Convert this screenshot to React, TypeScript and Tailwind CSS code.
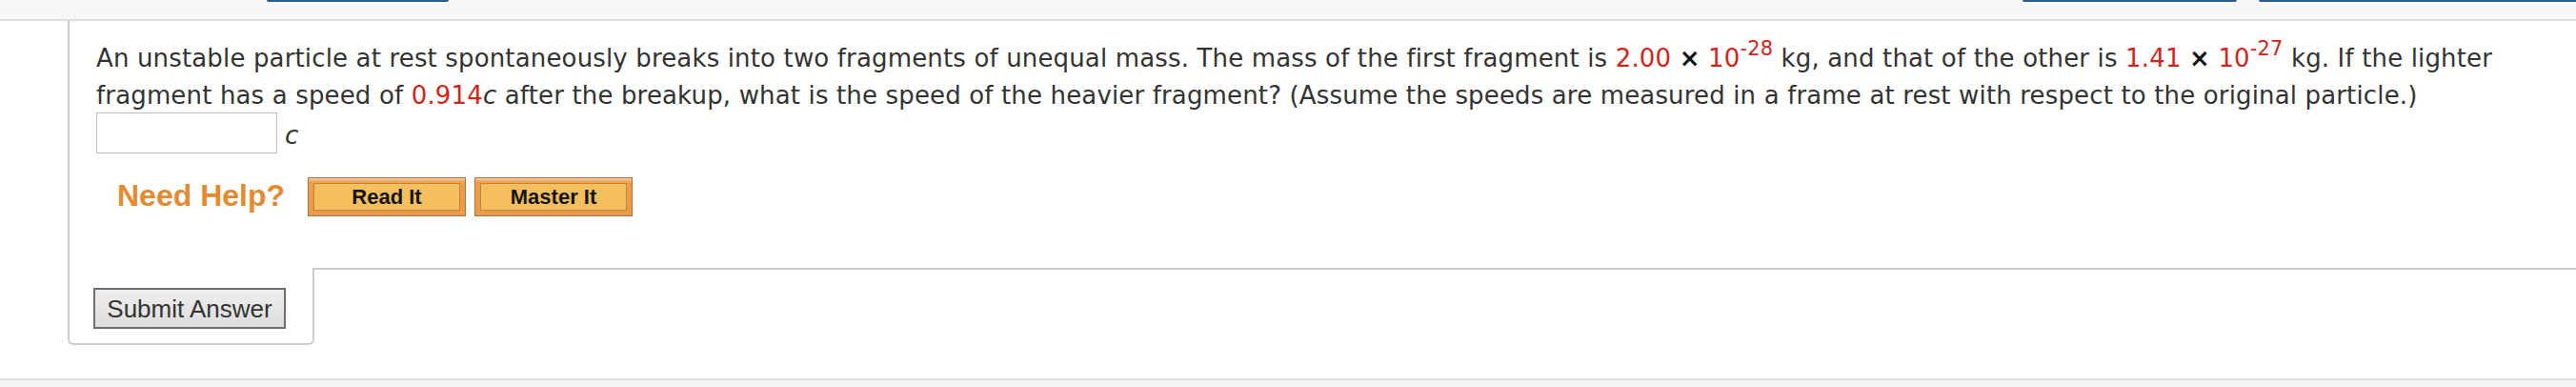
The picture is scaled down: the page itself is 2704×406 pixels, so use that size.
const RED = "text-[#cf261c]";

function Num({ children }: { children: React.ReactNode }) {
  return <span className={RED}>{children}</span>;
}

function Sci({ base, exp }: { base: string; exp: string }) {
  return (
    <>
      <Num>{base}</Num> <span className="font-bold text-[#111]">×</span>{" "}
      <Num>10</Num>
      <sup className={`${RED} text-[21px] leading-none relative top-[-0.55em] align-baseline`}>{exp}</sup>
    </>
  );
}

function HelpButton({ label }: { label: string }) {
  return (
    <button className="h-[41px] w-[166px] border border-[#a8733c] bg-[linear-gradient(to_bottom,#f6d2a6_0px,#ee9f4a_4px,#eb9944_100%)] p-[5px]">
      <span className="flex h-full w-full items-center justify-center border border-[#b9874c] bg-[#f4bf5c] font-['Liberation_Sans',Arial,sans-serif] text-[22px] font-bold text-[#141414]">
        {label}
      </span>
    </button>
  );
}

export default function App() {
  return (
    <div className="h-[406px] w-[2704px] overflow-hidden bg-white font-['DejaVu_Sans',Verdana,sans-serif] text-[#333]">
      {/* top bar with the bottoms of the nav buttons */}
      <div className="flex h-[22px] items-start border-b-2 border-[#dddddd] bg-[#f7f7f7]">
        <div className="ml-[280px] h-[2px] w-[191px] rounded-b-sm bg-[#2b5e91]" />
        <div className="flex-1" />
        <div className="h-[2px] w-[225px] rounded-b-sm bg-[#2b5e91]" />
        <div className="ml-[23px] h-[2px] w-[333px] rounded-bl-sm bg-[#2b5e91]" />
      </div>

      <div className="ml-[71px]">
        {/* question */}
        <div className="h-[259px] border-l-2 border-[#cccccc] pl-[28px] pt-[20px]">
          <p className="w-[2590px] text-[26px] leading-[39px] tracking-[0.15px]">
            An unstable particle at rest spontaneously breaks into two fragments of unequal mass. The mass of the
            first fragment is <Sci base="2.00" exp="-28" /> kg, and that of the other is{" "}
            <Sci base="1.41" exp="-27" /> kg. If the lighter fragment has a speed of <Num>0.914</Num>
            <i>c</i> after the breakup, what is the speed of the heavier fragment? (Assume the speeds are measured
            in a frame at rest with respect to the original particle.)
          </p>
          <div className="-mt-[2px] flex h-[43px] items-center">
            <input className="h-[43px] w-[190px] border border-[#bfbfbf] bg-white outline-none" />
            <i className="ml-[8px] mt-[6px] text-[26px]">c</i>
          </div>
          <div className="mt-[25px] flex items-center">
            <span className="mb-[4px] ml-[22px] whitespace-nowrap font-['Liberation_Sans',Arial,sans-serif] text-[32px] font-bold leading-[32px] text-[#e48a30]">
              Need Help?
            </span>
            <div className="ml-[24px] flex gap-[9px]">
              <HelpButton label="Read It" />
              <HelpButton label="Master It" />
            </div>
          </div>
        </div>

        {/* submit area */}
        <div className="flex">
          <div className="h-[81px] w-[259px] rounded-b-[6px] border-x-2 border-b-2 border-[#cccccc] pl-[25px] pt-[21px]">
            <button className="h-[43px] w-[202px] border-2 border-[#6e6e6e] bg-[linear-gradient(to_bottom,#efefef,#dcdcdc)] font-['Liberation_Sans',Arial,sans-serif] text-[26px] leading-none text-[#333]">
              Submit Answer
            </button>
          </div>
          <div className="h-[2px] flex-1 bg-[#cccccc]" />
        </div>
      </div>

      <div className="mt-[35px] h-[2px] bg-[#e0e0e0]" />
      <div className="h-[10px] bg-[#f5f5f5]" />
    </div>
  );
}
